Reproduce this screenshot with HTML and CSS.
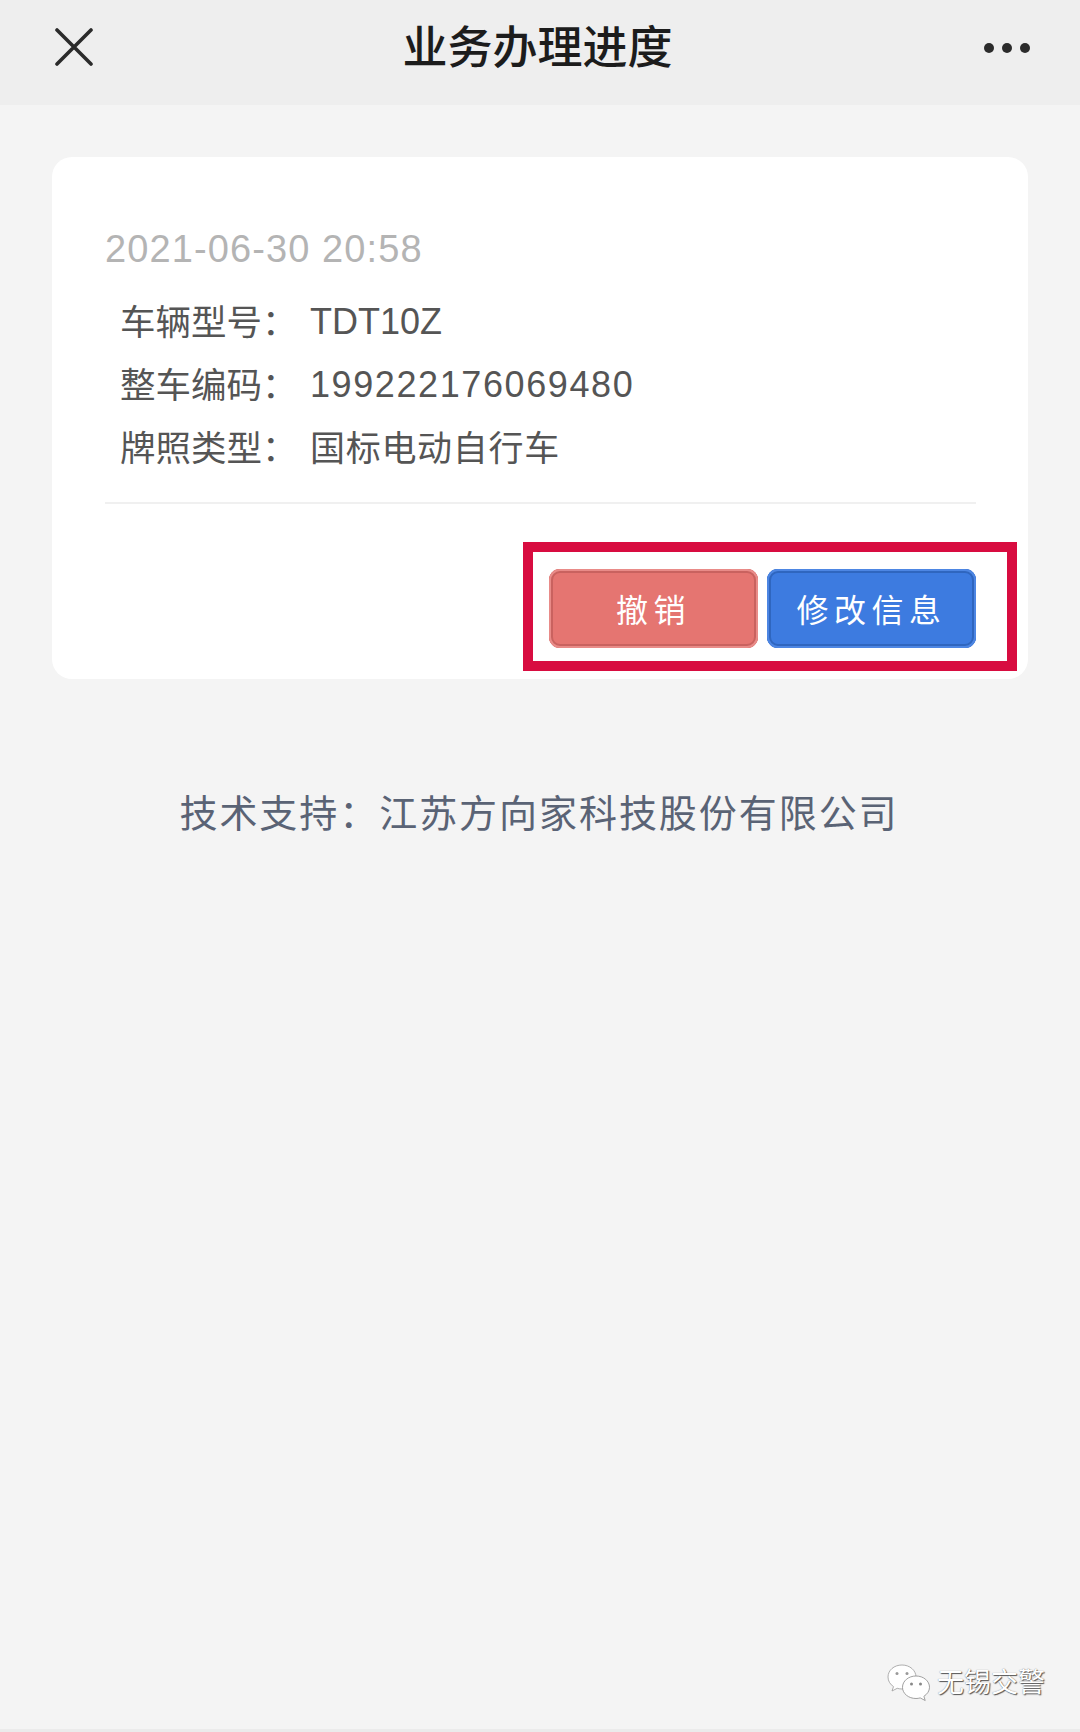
FILE: index.html
```html
<!DOCTYPE html>
<html lang="zh-CN">
<head>
<meta charset="utf-8">
<title>业务办理进度</title>
<link rel="stylesheet" href="styles.css">
</head>
<body>
<div class="page">
  <header class="topbar">
    <svg class="close" width="38" height="38" viewBox="0 0 38 38"><path d="M2 2 36 36M36 2 2 36" fill="none" stroke="#2b2b2b" stroke-width="3.600" stroke-linecap="round"/></svg>
    <h1 class="title">业务办理进度</h1>
    <div class="more"><i></i><i></i><i></i></div>
  </header>
  <main class="card">
    <div class="date">2021-06-30 20:58</div>
    <dl class="info">
      <div class="row"><dt>车辆型号：</dt><dd class="val-code">TDT10Z</dd></div>
      <div class="row"><dt>整车编码：</dt><dd class="val-num">199222176069480</dd></div>
      <div class="row"><dt>牌照类型：</dt><dd class="val-cjk">国标电动自行车</dd></div>
    </dl>
    <div class="divider"></div>
    <div class="actions">
      <button class="btn btn-red">撤销</button>
      <button class="btn btn-blue">修改信息</button>
      <div class="highlight"></div>
    </div>
  </main>
  <p class="support">技术支持：江苏方向家科技股份有限公司</p>
  <div class="mark">
    <svg class="mark-icon" width="44" height="38" viewBox="0 0 44 38">
      <path d="M15 1C7 1 1 6.300 1 13c0 4 2.200 7.400 5.500 9.600L5 27l5.200-2.700c1.500.4 3.100.7 4.800.7 7.800 0 14-5.400 14-12S22.800 1 15 1z" fill="#fff" stroke="#9a9a9a" stroke-width=".8"/>
      <circle cx="10" cy="9.500" r="1.500" fill="#999"/><circle cx="20" cy="9.500" r="1.500" fill="#999"/>
      <path d="M29 12c-7.500 0-13.500 5-13.500 11.300S21.500 34.500 29 34.500c1.500 0 2.900-.2 4.200-.6l5 2.600-1.300-4.200c3.300-2.100 5.600-5.300 5.600-9C42.500 17 36.500 12 29 12z" fill="#fff" stroke="#8a8a8a" stroke-width=".8"/>
      <circle cx="24.500" cy="20" r="1.500" fill="#888"/><circle cx="33.500" cy="20" r="1.500" fill="#888"/>
    </svg>
    <span class="mark-text">无锡交警</span>
  </div>
</div>
</body>
</html>
```
FILE: styles.css
```css
* { box-sizing: border-box; }
html, body { margin: 0; padding: 0; }
body {
  width: 1080px;
  height: 1732px;
  overflow: hidden;
  background: #f4f4f4;
  font-family: "Liberation Sans", "Noto Sans CJK SC", sans-serif;
}
.page {
  position: relative;
  height: 1732px;
  display: flex;
  flex-direction: column;
  border-bottom: 3px solid #ebebeb;
}
.topbar {
  height: 105px;
  flex: none;
  background: #eeeeee;
  padding: 0 50px 12px 55px;
  display: flex;
  align-items: center;
  justify-content: space-between;
}
.title {
  margin: 4px 0 0 -2px;
  font-size: 45px;
  line-height: 60px;
  font-weight: 500;
  color: #1c1c1c;
}
.more { display: flex; gap: 8px; margin-top: 2px; }
.more i {
  width: 10px;
  height: 10px;
  border-radius: 50%;
  background: #2b2b2b;
}
.card {
  margin: 52px 52px 0;
  height: 522px;
  flex: none;
  background: #fff;
  border-radius: 20px;
  padding: 63px 52px 0 53px;
}
.date {
  font-size: 38px;
  line-height: 58px;
  letter-spacing: 1.100px;
  color: #b4b4b4;
}
.info { margin: 11px 0 0; }
.row {
  display: flex;
  height: 63px;
  align-items: center;
  padding-left: 15px;
  font-size: 35.500px;
  color: #555;
}
.row dt { width: 190px; margin-top: -2px; }
.row dd { margin: 2px 0 0; font-size: 36px; }
.row .val-code { letter-spacing: 0; }
.row .val-num { letter-spacing: 1.600px; }
.row .val-cjk { font-size: 35px; letter-spacing: .7px; margin-top: -2px; }
.divider {
  height: 2px;
  margin-top: 24px;
  background: #f0f0f0;
}
.actions {
  position: relative;
  display: flex;
  justify-content: flex-end;
  gap: 9px;
  margin-top: 65px;
}
.btn {
  width: 209px;
  height: 79px;
  border: 0;
  border-radius: 11px;
  padding: 0 0 2px;
  font: inherit;
  font-size: 32px;
  letter-spacing: 5.500px;
  color: #fff;
}
.btn-red {
  background: #e57571;
  box-shadow: inset 0 0 0 2px #e98b88, inset 0 0 0 4px #c9625f;
}
.btn-blue {
  background: #3d7be0;
  box-shadow: inset 0 0 0 2px #4d86e3, inset 0 0 0 4px #2f66bf;
}
.highlight {
  position: absolute;
  right: -41px;
  top: -27px;
  width: 494px;
  height: 129px;
  border: 10px solid #d80c40;
  pointer-events: none;
}
.support {
  margin: 107px 0 0;
  text-align: center;
  font-size: 38px;
  line-height: 56px;
  letter-spacing: 1.950px;
  padding-right: 2px;
  color: #5a6375;
}
.mark {
  position: absolute;
  left: 887px;
  top: 1664px;
  display: flex;
  align-items: center;
  gap: 6px;
}
.mark-text {
  font-size: 27px;
  line-height: 38px;
  color: #fff;
  text-shadow: 1px 1px 1px #555, 0 0 1px #777;
}
```
